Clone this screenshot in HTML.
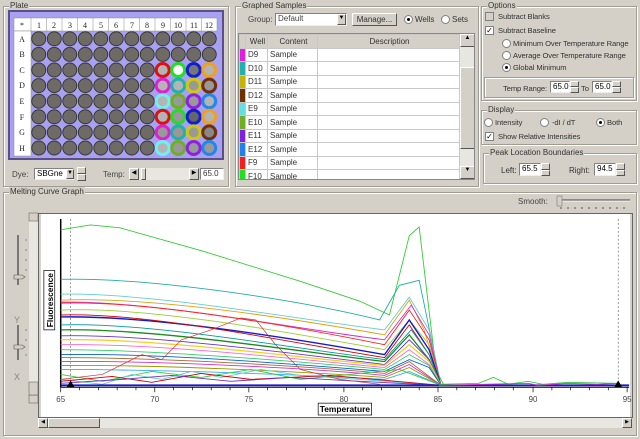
<!DOCTYPE html>
<html><head><style>
*{margin:0;padding:0;box-sizing:border-box}
body{width:640px;height:439px;background:#d4d0c8;font-family:"Liberation Sans",sans-serif;font-size:8px;color:#000;position:relative;overflow:hidden}
.a{position:absolute}
.g{position:absolute;border:1px solid #a09c94;box-shadow:1px 1px 0 #fff inset,1px 1px 0 #fff}
.gl{position:absolute;background:#d4d0c8;padding:0 1px;color:#333;font-size:8px;top:-6px;left:5px}
.in{position:absolute;background:#fff;border:1px solid #808080;border-right-color:#eee;border-bottom-color:#eee;font-size:8px;padding-left:2px;line-height:10px}
.btn{position:absolute;background:#d4d0c8;border:1px solid #fff;border-right-color:#555;border-bottom-color:#555;font-size:8px;text-align:center}
.cb{position:absolute;width:9px;height:9px;background:#fff;border:1px solid #808080;font-size:8px;line-height:7px;text-align:center}
.rb{position:absolute;width:9px;height:9px;background:#fff;border:1px solid #808080;border-radius:50%}
.rb.on:after{content:"";position:absolute;left:2px;top:2px;width:3px;height:3px;background:#000;border-radius:50%}
.op{font-size:7.6px;letter-spacing:-0.1px}
table{border-collapse:collapse}
td{border:1px solid #c8c8c8;height:13.5px;font-size:8px;padding-left:2px;color:#333}
</style></head><body>

<div class="g" style="left:3px;top:6px;width:226px;height:181px"><span class="gl">Plate</span></div>
<svg class="a" style="left:0;top:0" width="232" height="165">
<defs><pattern id="w" x="31" y="31" width="15.5" height="15.6" patternUnits="userSpaceOnUse"><circle cx="7.75" cy="7.8" r="7" fill="#6e6b67" stroke="#2a2a2a" stroke-width="0.8"/></pattern></defs>
<rect x="8" y="10" width="216" height="150" fill="#5a4f8a"/>
<rect x="10" y="12" width="212" height="146" fill="#a8a0f0"/>
<rect x="14" y="18" width="203" height="13" fill="#fff" stroke="#888" stroke-width=".5"/>
<rect x="14" y="31" width="17" height="125" fill="#fff" stroke="#888" stroke-width=".5"/>
<rect x="31" y="31" width="186" height="125" fill="url(#w)"/>
<g stroke="#888" stroke-width=".5">
<line x1="31" y1="18" x2="31" y2="31"/><line x1="46.5" y1="18" x2="46.5" y2="31"/><line x1="62" y1="18" x2="62" y2="31"/><line x1="77.5" y1="18" x2="77.5" y2="31"/><line x1="93" y1="18" x2="93" y2="31"/><line x1="108.5" y1="18" x2="108.5" y2="31"/><line x1="124" y1="18" x2="124" y2="31"/><line x1="139.5" y1="18" x2="139.5" y2="31"/><line x1="155" y1="18" x2="155" y2="31"/><line x1="170.5" y1="18" x2="170.5" y2="31"/><line x1="186" y1="18" x2="186" y2="31"/><line x1="201.5" y1="18" x2="201.5" y2="31"/>
</g>
<g font-family="Liberation Serif" font-size="8" text-anchor="middle" fill="#222">
<text x="22" y="28">*</text><text x="39" y="28">1</text><text x="54" y="28">2</text><text x="70" y="28">3</text><text x="85" y="28">4</text><text x="101" y="28">5</text><text x="116" y="28">6</text><text x="132" y="28">7</text><text x="147" y="28">8</text><text x="163" y="28">9</text><text x="178" y="28">10</text><text x="194" y="28">11</text><text x="209" y="28">12</text>
<text x="22" y="42">A</text><text x="22" y="57">B</text><text x="22" y="73">C</text><text x="22" y="88">D</text><text x="22" y="104">E</text><text x="22" y="120">F</text><text x="22" y="135">G</text><text x="22" y="151">H</text>
</g>
<g fill="#b4b4b4" stroke-width="3">
<circle cx="162.7" cy="70" r="6.5" stroke="#e01010"/><circle cx="178.2" cy="70" r="6.5" stroke="#20e020" fill="#fff"/><circle cx="193.7" cy="70" r="6.5" stroke="#1020d0" fill="#777"/><circle cx="209.2" cy="70" r="6.5" stroke="#f0a020"/>
<circle cx="162.7" cy="85.6" r="6.5" stroke="#e020d0"/><circle cx="178.2" cy="85.6" r="6.5" stroke="#20b0b0"/><circle cx="193.7" cy="85.6" r="6.5" stroke="#d0c810" fill="#999"/><circle cx="209.2" cy="85.6" r="6.5" stroke="#703010" fill="#999"/>
<circle cx="162.7" cy="101.2" r="6.5" stroke="#70f0f0"/><circle cx="178.2" cy="101.2" r="6.5" stroke="#70b020" fill="#999"/><circle cx="193.7" cy="101.2" r="6.5" stroke="#9020e0" fill="#999"/><circle cx="209.2" cy="101.2" r="6.5" stroke="#2088e8"/>
<circle cx="162.7" cy="116.8" r="6.5" stroke="#e01010"/><circle cx="178.2" cy="116.8" r="6.5" stroke="#20e020" fill="#999"/><circle cx="193.7" cy="116.8" r="6.5" stroke="#1020d0" fill="#666"/><circle cx="209.2" cy="116.8" r="6.5" stroke="#f0a020"/>
<circle cx="162.7" cy="132.4" r="6.5" stroke="#e020d0" fill="#999"/><circle cx="178.2" cy="132.4" r="6.5" stroke="#20b0b0" fill="#999"/><circle cx="193.7" cy="132.4" r="6.5" stroke="#d0c810" fill="#999"/><circle cx="209.2" cy="132.4" r="6.5" stroke="#703010" fill="#888"/>
<circle cx="162.7" cy="148" r="6.5" stroke="#70f0f0"/><circle cx="178.2" cy="148" r="6.5" stroke="#70b020" fill="#999"/><circle cx="193.7" cy="148" r="6.5" stroke="#9020e0" fill="#999"/><circle cx="209.2" cy="148" r="6.5" stroke="#2088e8" fill="#999"/>
</g>
</svg>
<div class="a" style="left:12px;top:170px;color:#444">Dye:</div>
<div class="in" style="left:34px;top:168px;width:40px;height:12px">SBGne</div>
<div class="btn" style="left:66px;top:169px;width:8px;height:10px;font-size:6px">▼</div>
<div class="btn" style="left:77px;top:167px;width:9px;height:7px"></div>
<div class="btn" style="left:77px;top:174px;width:9px;height:7px"></div>
<div class="a" style="left:103px;top:170px;color:#444">Temp:</div>
<div class="a" style="left:129px;top:168px;width:70px;height:12px;background:#e8e6e0"></div>
<div class="btn" style="left:129px;top:168px;width:10px;height:12px;font-size:6px">◀</div>
<div class="btn" style="left:141px;top:168px;width:5px;height:12px"></div>
<div class="btn" style="left:189px;top:168px;width:10px;height:12px;font-size:6px">▶</div>
<div class="in" style="left:200px;top:168px;width:24px;height:12px;color:#333">65.0</div>

<div class="g" style="left:235px;top:6px;width:244px;height:181px"><span class="gl">Graphed Samples</span></div>
<div class="a" style="left:248px;top:15px;color:#444">Group:</div>
<div class="in" style="left:275px;top:13px;width:72px;height:13px;color:#444">Default</div>
<div class="btn" style="left:337px;top:14px;width:9px;height:11px;font-size:6px">▼</div>
<div class="btn" style="left:352px;top:13px;width:45px;height:13px;line-height:11px;color:#333">Manage...</div>
<div class="rb on" style="left:404px;top:15px"></div><div class="a" style="left:415px;top:15px;color:#333">Wells</div>
<div class="rb" style="left:441px;top:15px"></div><div class="a" style="left:452px;top:15px;color:#333">Sets</div>
<div class="a" style="left:238px;top:33px;width:237px;height:147px;background:#fff;border:1px solid #888;overflow:hidden">
<table style="width:221px">
<tr style="background:#d4d0c8"><td style="width:6px;padding:0"></td><td style="width:22px;text-align:center">Well</td><td style="width:50px;text-align:center">Content</td><td style="text-align:center">Description</td></tr>
<tr><td style="background:#e020e0"></td><td>D9</td><td>Sample</td><td></td></tr>
<tr><td style="background:#20b0b0"></td><td>D10</td><td>Sample</td><td></td></tr>
<tr><td style="background:#c8b400"></td><td>D11</td><td>Sample</td><td></td></tr>
<tr><td style="background:#703000"></td><td>D12</td><td>Sample</td><td></td></tr>
<tr><td style="background:#60e0e0"></td><td>E9</td><td>Sample</td><td></td></tr>
<tr><td style="background:#70b020"></td><td>E10</td><td>Sample</td><td></td></tr>
<tr><td style="background:#8020e0"></td><td>E11</td><td>Sample</td><td></td></tr>
<tr><td style="background:#2080f0"></td><td>E12</td><td>Sample</td><td></td></tr>
<tr><td style="background:#f02020"></td><td>F9</td><td>Sample</td><td></td></tr>
<tr><td style="background:#20e020"></td><td>F10</td><td>Sample</td><td></td></tr>
</table>
<div class="a" style="left:221px;top:0;width:15px;height:146px;background:#e8e6e0"></div>
<div class="btn" style="left:221px;top:0;width:15px;height:13px;font-size:6px">▲</div>
<div class="btn" style="left:221px;top:33px;width:15px;height:82px"></div>
<div class="btn" style="left:221px;top:132px;width:15px;height:13px;font-size:6px">▼</div>
</div>

<div class="g" style="left:481px;top:6px;width:156px;height:95px"><span class="gl">Options</span></div>
<div class="cb" style="left:485px;top:12px;background:#d4d0c8"></div><div class="a op" style="left:498px;top:12px;color:#333">Subtract Blanks</div>
<div class="cb" style="left:485px;top:26px">✓</div><div class="a op" style="left:498px;top:26px;color:#333">Subtract Baseline</div>
<div class="rb" style="left:502px;top:39px"></div><div class="a op" style="left:513px;top:39px;color:#333">Minimum Over Temperature Range</div>
<div class="rb" style="left:502px;top:51px"></div><div class="a op" style="left:513px;top:51px;color:#333">Average Over Temperature Range</div>
<div class="rb on" style="left:502px;top:63px"></div><div class="a op" style="left:513px;top:63px;color:#333">Global Minimum</div>
<div class="g" style="left:484px;top:77px;width:150px;height:21px"></div>
<div class="a op" style="left:503px;top:84px;color:#333">Temp Range:</div>
<div class="in" style="left:550px;top:81px;width:20px;height:12px">65.0</div>
<div class="btn" style="left:570px;top:81px;width:9px;height:6px"></div><div class="btn" style="left:570px;top:87px;width:9px;height:6px"></div>
<div class="a op" style="left:581px;top:84px;color:#333">To</div>
<div class="in" style="left:592px;top:81px;width:20px;height:12px">65.0</div>
<div class="btn" style="left:612px;top:81px;width:9px;height:6px"></div><div class="btn" style="left:612px;top:87px;width:9px;height:6px"></div>

<div class="g" style="left:481px;top:110px;width:156px;height:35px"><span class="gl">Display</span></div>
<div class="rb" style="left:484px;top:118px"></div><div class="a op" style="left:495px;top:118px;color:#333">Intensity</div>
<div class="rb" style="left:540px;top:118px"></div><div class="a op" style="left:552px;top:118px;color:#333">-dI / dT</div>
<div class="rb on" style="left:596px;top:118px"></div><div class="a op" style="left:607px;top:118px;color:#333">Both</div>
<div class="cb" style="left:485px;top:132px">✓</div><div class="a op" style="left:498px;top:132px;color:#333">Show Relative Intensities</div>

<div class="g" style="left:483px;top:153px;width:154px;height:31px"><span class="gl">Peak Location Boundaries</span></div>
<div class="a" style="left:501px;top:166px;color:#333">Left:</div>
<div class="in" style="left:519px;top:163px;width:22px;height:13px">65.5</div>
<div class="btn" style="left:541px;top:163px;width:9px;height:7px"></div><div class="btn" style="left:541px;top:170px;width:9px;height:6px"></div>
<div class="a" style="left:569px;top:166px;color:#333">Right:</div>
<div class="in" style="left:594px;top:163px;width:22px;height:13px">94.5</div>
<div class="btn" style="left:616px;top:163px;width:9px;height:7px"></div><div class="btn" style="left:616px;top:170px;width:9px;height:6px"></div>

<div class="g" style="left:3px;top:192px;width:634px;height:244px"><span class="gl">Melting Curve Graph</span></div>
<div class="a" style="left:518px;top:197px;color:#444">Smooth:</div>
<svg class="a" style="left:555px;top:195px" width="80" height="16"><line x1="4" y1="5" x2="75" y2="5" stroke="#444"/><line x1="4" y1="6" x2="75" y2="6" stroke="#fff"/><rect x="2" y="1" width="5" height="10" fill="#d4d0c8" stroke="#888" stroke-width=".7"/><g stroke="#555">
<line x1="6" y1="12" x2="6" y2="14"/><line x1="13" y1="12" x2="13" y2="14"/><line x1="20" y1="12" x2="20" y2="14"/><line x1="27" y1="12" x2="27" y2="14"/><line x1="34" y1="12" x2="34" y2="14"/><line x1="41" y1="12" x2="41" y2="14"/><line x1="48" y1="12" x2="48" y2="14"/><line x1="55" y1="12" x2="55" y2="14"/><line x1="62" y1="12" x2="62" y2="14"/><line x1="69" y1="12" x2="69" y2="14"/></g></svg>
<svg class="a" style="left:8px;top:210px" width="30" height="200">
<line x1="10" y1="25" x2="10" y2="75" stroke="#777" stroke-width="2"/><line x1="10" y1="115" x2="10" y2="150" stroke="#777" stroke-width="2"/>
<path d="M6 65h8l3 2-3 2h-8z" fill="#d4d0c8" stroke="#555" stroke-width=".6"/><path d="M6 135h8l3 2-3 2h-8z" fill="#d4d0c8" stroke="#555" stroke-width=".6"/>
<text x="6" y="113" font-size="9" fill="#888" font-family="Liberation Sans">Y</text><text x="6" y="170" font-size="9" fill="#888" font-family="Liberation Sans">X</text>
<g stroke="#888"><line x1="17" y1="30" x2="19" y2="30"/><line x1="17" y1="40" x2="19" y2="40"/><line x1="17" y1="50" x2="19" y2="50"/><line x1="17" y1="60" x2="19" y2="60"/><line x1="17" y1="120" x2="19" y2="120"/><line x1="17" y1="130" x2="19" y2="130"/><line x1="17" y1="145" x2="19" y2="145"/></g>
<rect x="21" y="3" width="9" height="190" fill="#e8e6e0"/>
<rect x="21" y="3" width="9" height="8" fill="#d4d0c8" stroke="#555" stroke-width=".5"/>
<rect x="21" y="185" width="9" height="8" fill="#d4d0c8" stroke="#555" stroke-width=".5"/>
<rect x="21" y="172" width="9" height="13" fill="#d4d0c8" stroke="#555" stroke-width=".5"/>
</svg>
<div class="a" style="left:38px;top:418px;width:594px;height:10px;background:#e8e6e0"></div>
<div class="btn" style="left:38px;top:418px;width:10px;height:10px;font-size:5px">◀</div>
<div class="btn" style="left:48px;top:418px;width:52px;height:10px"></div>
<div class="btn" style="left:622px;top:418px;width:10px;height:10px;font-size:5px">▶</div>

<svg class="a" style="left:38px;top:213px;border:1px solid #666" width="595" height="205" viewBox="38 213 595 205">
<rect x="38" y="213" width="595" height="205" fill="#fff"/>
<line x1="58" y1="218" x2="58" y2="388" stroke="#000" stroke-width="1.5"/>
<line x1="68" y1="218" x2="68" y2="388" stroke="#555" stroke-dasharray="2,2" stroke-width=".6"/>
<line x1="621" y1="218" x2="621" y2="388" stroke="#555" stroke-dasharray="2,2" stroke-width=".6"/>
<g fill="none" stroke-width="0.9">
<path d="M58 229 L88 224 L118 227 L200 250 L300 281 L360 301 L390 315 L410 235 L420 226 L437 370 L445 386" stroke="#33cc33"/>
<path d="M58 279 C150 277 300 300 380 320 L400 285 L420 280 L442 386" stroke="#22aaaa"/>
<path d="M58 294 C150 292 300 320 385 330 L410 297 L430 330 L442 386" stroke="#66cccc"/>
<path d="M58 300 C150 296 300 320 385 335 L410 300 L425 330 L442 386" stroke="#e0a010"/>
<path d="M58 302 C150 300 300 330 385 340 L412 305 L430 335 L442 386" stroke="#cc33cc"/>
<path d="M58 303 C150 300 300 328 385 345 L410 310 L430 340 L442 386" stroke="#ff2222"/>
<path d="M58 310 C150 306 300 335 385 350 L410 320 L430 345 L442 386" stroke="#99cc33"/>
<path d="M58 317 C150 315 300 340 385 355 L410 320 L430 350 L442 386" stroke="#1818cc" stroke-width="1.4"/>
<path d="M58 315 C150 312 300 345 385 358 L410 325 L430 355 L442 386" stroke="#cc0000"/>
<path d="M58 325 C150 322 300 350 385 360 L412 330 L430 355 L442 386" stroke="#009999"/>
<path d="M58 330 C150 328 300 352 385 362 L410 335 L430 360 L442 386" stroke="#1a8a1a" stroke-width="1.3"/>
<path d="M58 336 C150 334 300 355 385 365 L410 340 L430 360 L442 386" stroke="#6633cc"/>
<path d="M58 340 C150 338 300 358 385 366 L410 345 L430 362 L442 386" stroke="#f0d020" stroke-width="1.3"/>
<path d="M58 345 C150 343 300 360 385 368 L410 350 L430 365 L442 386" stroke="#ff66cc"/>
<path d="M58 350 C150 350 300 362 385 370 L410 355 L430 366 L442 386" stroke="#33cc66"/>
<path d="M58 355 C150 353 300 365 385 372 L410 360 L430 368 L442 386" stroke="#0066cc"/>
<path d="M58 358 C150 358 300 366 385 374 L410 362 L442 386" stroke="#aa6633"/>
<path d="M58 362 C150 361 300 368 385 376 L410 365 L442 386" stroke="#cc33cc"/>
<path d="M58 366 C150 365 300 372 385 378 L410 368 L442 386" stroke="#999900"/>
<path d="M58 370 C150 370 300 375 385 380 L410 372 L442 386" stroke="#33aaff"/>
<path d="M58 375 L100 382 L150 372 L200 378 L250 370 L300 380 L350 375 L400 370 L442 386" stroke="#33cc33"/>
<path d="M58 380 L100 385 L130 375 L160 380 L190 372 L220 378 L260 370 L300 376 L360 380 L442 386" stroke="#66cccc"/>
<path d="M58 382 L110 377 L150 383 L200 374 L250 380 L330 376 L442 386" stroke="#cc0000"/>
<path d="M58 384 L120 380 L170 376 L230 382 L290 378 L360 382 L442 386" stroke="#6633cc"/>
<path d="M58 380 L100 375 L120 365 L140 355 L160 360 L180 340 L210 330 L240 318 L255 320 L275 345 L300 370 L340 380 L380 385" stroke="#cc3333" stroke-width=".7"/>
<path d="M58 386 L632 386" stroke="#1a1acc" stroke-width="2"/>
<path d="M440 385 L480 384 L495 378 L510 385 L530 382 L545 385 L570 383 L620 384" stroke="#33cc33"/>
<path d="M440 386 L530 384 L540 386 L570 384 L600 385 L620 384" stroke="#cc33cc"/>
</g>
<line x1="58" y1="388" x2="632" y2="388" stroke="#000"/>
<g stroke="#000" stroke-width=".7">
<line x1="58" y1="388" x2="58" y2="393"/><line x1="77" y1="388" x2="77" y2="391"/><line x1="96" y1="388" x2="96" y2="391"/><line x1="115" y1="388" x2="115" y2="391"/><line x1="134" y1="388" x2="134" y2="391"/><line x1="153" y1="388" x2="153" y2="393"/><line x1="172" y1="388" x2="172" y2="391"/><line x1="191" y1="388" x2="191" y2="391"/><line x1="210" y1="388" x2="210" y2="391"/><line x1="229" y1="388" x2="229" y2="391"/><line x1="248" y1="388" x2="248" y2="393"/><line x1="267" y1="388" x2="267" y2="391"/><line x1="286" y1="388" x2="286" y2="391"/><line x1="305" y1="388" x2="305" y2="391"/><line x1="324" y1="388" x2="324" y2="391"/><line x1="344" y1="388" x2="344" y2="393"/><line x1="363" y1="388" x2="363" y2="391"/><line x1="382" y1="388" x2="382" y2="391"/><line x1="401" y1="388" x2="401" y2="391"/><line x1="420" y1="388" x2="420" y2="391"/><line x1="439" y1="388" x2="439" y2="393"/><line x1="458" y1="388" x2="458" y2="391"/><line x1="477" y1="388" x2="477" y2="391"/><line x1="496" y1="388" x2="496" y2="391"/><line x1="515" y1="388" x2="515" y2="391"/><line x1="535" y1="388" x2="535" y2="393"/><line x1="554" y1="388" x2="554" y2="391"/><line x1="573" y1="388" x2="573" y2="391"/><line x1="592" y1="388" x2="592" y2="391"/><line x1="611" y1="388" x2="611" y2="391"/><line x1="630" y1="388" x2="630" y2="393"/>
</g>
<path d="M64 388 L68 381 L72 388Z" fill="#000"/><path d="M617 388 L621 381 L625 388Z" fill="#000"/>
<g font-family="Liberation Sans" font-size="8" fill="#444" text-anchor="middle">
<text x="58" y="403">65</text><text x="153" y="403">70</text><text x="248" y="403">75</text><text x="344" y="403">80</text><text x="439" y="403">85</text><text x="535" y="403">90</text><text x="630" y="403">95</text>
</g>
<rect x="318" y="404" width="54" height="12" fill="#fff" stroke="#000" stroke-width=".7"/>
<text x="345" y="413" font-family="Liberation Sans" font-size="8.5" font-weight="bold" text-anchor="middle">Temperature</text>
<rect x="41" y="270" width="11" height="60" fill="#fff" stroke="#000" stroke-width=".7"/>
<text transform="translate(50,300) rotate(-90)" font-family="Liberation Sans" font-size="8.5" font-weight="bold" text-anchor="middle">Fluorescence</text>
</svg>
</body></html>
